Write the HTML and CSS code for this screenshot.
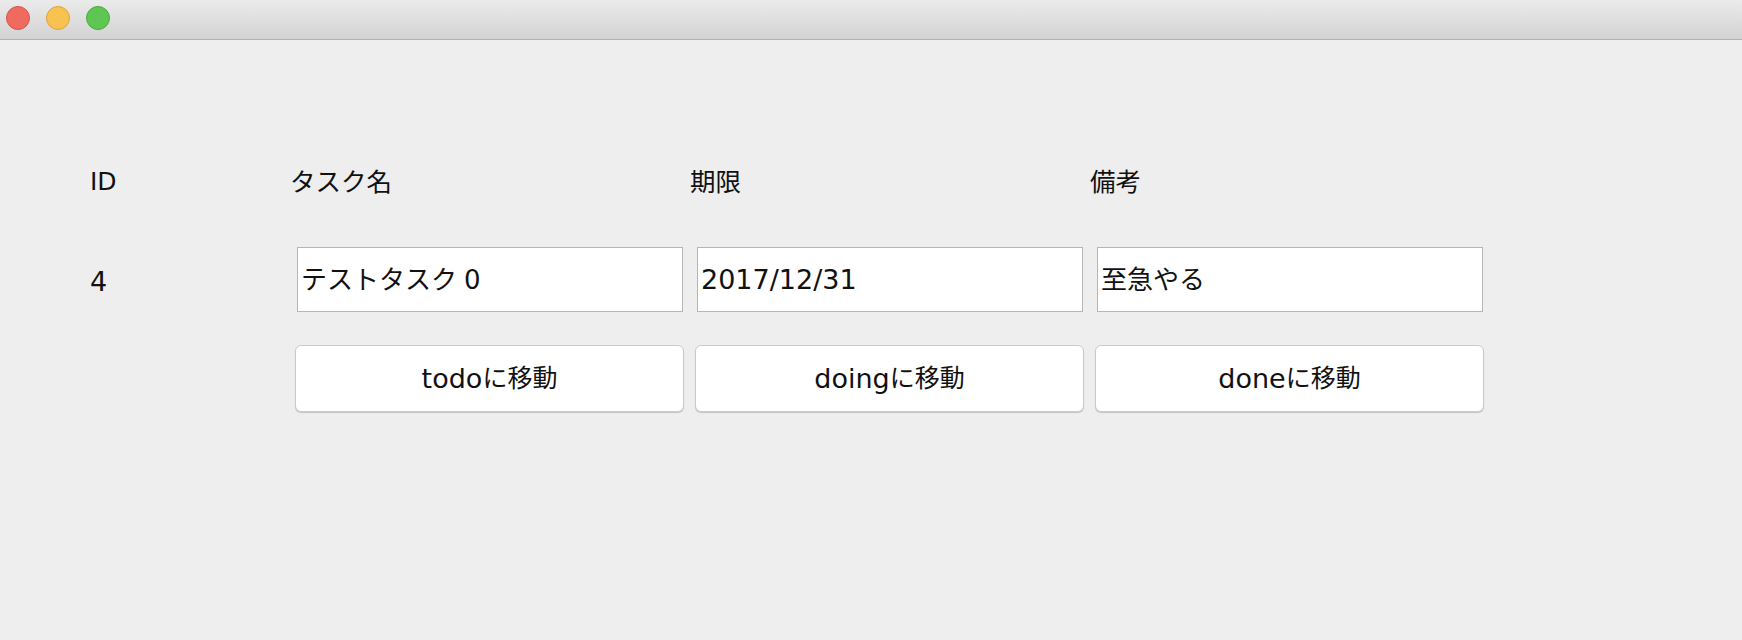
FILE: index.html
```html
<!DOCTYPE html>
<html lang="ja">
<head>
<meta charset="utf-8">
<title>タスク</title>
<link rel="stylesheet" href="styles.css">
</head>
<body>
<div class="window">
  <div class="titlebar">
    <span class="light red"></span>
    <span class="light yellow"></span>
    <span class="light green"></span>
  </div>
  <div class="content">
    <div class="grid">
      <div class="head"><span class="id-head">ID</span></div>
      <div class="head">タスク名</div>
      <div class="head">期限</div>
      <div class="head">備考</div>

      <div class="idval">4</div>
      <div class="field">テストタスク<span class="num">0</span></div>
      <div class="field"><span class="lat">2017/12/31</span></div>
      <div class="field">至急やる</div>

      <div class="spacer"></div>
      <button class="btn"><span class="lat">todo</span>に移動</button>
      <button class="btn"><span class="lat">doing</span>に移動</button>
      <button class="btn"><span class="lat">done</span>に移動</button>
    </div>
  </div>
</div>
</body>
</html>
```

FILE: styles.css
```css
html, body {
  margin: 0;
  padding: 0;
  background: #eeeeee;
}

body {
  width: 1742px;
  height: 640px;
  overflow: hidden;
  font-family: "DejaVu Sans", "Noto Sans CJK JP", sans-serif;
  color: #111111;
}

.window {
  display: flex;
  flex-direction: column;
  height: 640px;
}

.titlebar {
  box-sizing: border-box;
  height: 40px;
  display: flex;
  align-items: flex-start;
  gap: 16px;
  padding: 6px 0 0 6px;
  background: linear-gradient(to bottom, #ebebeb 0%, #dcdcdc 60%, #d3d3d3 100%);
  border-bottom: 1px solid #b2b2b2;
}

.light {
  box-sizing: border-box;
  width: 24px;
  height: 24px;
  border-radius: 50%;
  display: block;
}

.red {
  background: #ef6b60;
  border: 1px solid #d9534a;
}

.yellow {
  background: #f7c250;
  border: 1px solid #dfa43a;
}

.green {
  background: #5ec653;
  border: 1px solid #4aac3f;
}

.content {
  padding: 106px 0 0 90px;
}

.grid {
  display: grid;
  grid-template-columns: 200px 400px 400px 400px;
  grid-template-rows: 68px 65px 67px;
  row-gap: 33px;
  align-items: center;
}

.head {
  font-family: "Noto Sans CJK JP", sans-serif;
  font-size: 25.5px;
  line-height: 1;
}

.id-head {
  font-family: "DejaVu Sans", sans-serif;
  font-size: 25px;
}

.idval {
  font-size: 27px;
  line-height: 1;
  padding-top: 4px;
}

.field {
  box-sizing: border-box;
  margin-left: 7px;
  width: 386px;
  height: 65px;
  background: #ffffff;
  border: 1px solid #b5b5b5;
  display: flex;
  align-items: center;
  padding-left: 3px;
  font-size: 26px;
  line-height: 1;
  white-space: nowrap;
}

.num {
  margin-left: 7px;
}

.lat {
  font-family: "DejaVu Sans", sans-serif;
  font-size: 27px;
}

.btn {
  box-sizing: border-box;
  margin: 0 0 0 5px;
  width: 389px;
  height: 67px;
  background: #ffffff;
  border: 1px solid #c9c9c9;
  border-radius: 6px;
  box-shadow: 0 1px 1px rgba(0, 0, 0, 0.18);
  font-family: "DejaVu Sans", "Noto Sans CJK JP", sans-serif;
  font-size: 25px;
  color: #111111;
  line-height: 1;
  padding: 0;
  display: flex;
  align-items: center;
  justify-content: center;
}

.spacer {
  height: 1px;
}
```
